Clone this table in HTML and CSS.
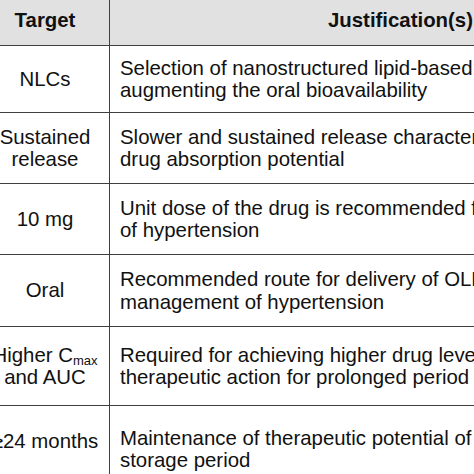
FILE: index.html
```html
<!DOCTYPE html>
<html>
<head>
<meta charset="utf-8">
<link rel="stylesheet" href="styles.css">
</head>
<body>
<table class="spec">
  <colgroup><col class="c1"><col class="c2"></colgroup>
  <thead>
    <tr class="head"><th>Target</th><th>Justification(s)</th></tr>
  </thead>
  <tbody>
    <tr class="r1"><td class="t">NLCs</td><td class="j">Selection of nanostructured lipid-based carriers for<br>augmenting the oral bioavailability</td></tr>
    <tr class="r2"><td class="t">Sustained<br>release</td><td class="j">Slower and sustained release characteristics enhance the<br>drug absorption potential</td></tr>
    <tr class="r3"><td class="t">10 mg</td><td class="j">Unit dose of the drug is recommended for the management<br>of hypertension</td></tr>
    <tr class="r4"><td class="t">Oral</td><td class="j">Recommended route for delivery of OLM for the<br>management of hypertension</td></tr>
    <tr class="r5"><td class="t">Higher C<sub>max</sub><br>and AUC</td><td class="j">Required for achieving higher drug levels for<br>therapeutic action for prolonged period</td></tr>
    <tr class="r6"><td class="t">≥24 months</td><td class="j">Maintenance of therapeutic potential of the drug during<br>storage period</td></tr>
  </tbody>
</table>
</body>
</html>
```
FILE: styles.css
```css
html, body {
  margin: 0;
  padding: 0;
  background: #ffffff;
  overflow: hidden;
  width: 474px;
  height: 474px;
}
.spec {
  font-family: "Liberation Sans", Arial, Helvetica, sans-serif;
  font-size: 20.4px;
  line-height: 22.5px;
  color: #111111;
  border-collapse: collapse;
  table-layout: fixed;
  width: 711px;
  margin-left: -20px;
  margin-top: -6px;
}
.c1 { width: 129px; }
.c2 { width: 582px; }
.spec th, .spec td {
  border: 1.5px solid #3f3f3f;
  padding: 0;
  vertical-align: middle;
  white-space: nowrap;
}
.spec th {
  background: #e1e1e1;
  font-weight: bold;
  text-align: center;
  height: 50px;
}
.spec td.t { text-align: center; }
.spec td.j { text-align: left; padding-left: 10px; }
.r1 td { height: 66px; }
.r2 td { height: 70px; }
.r3 td { height: 70px; }
.r4 td { height: 71px; }
.r5 td { height: 78px; }
.r6 td { height: 86px; }
.r6 td.t { height: 70px; padding-bottom: 16px; }
sub {
  font-size: 13px;
  line-height: 0;
  vertical-align: -3px;
}
```
